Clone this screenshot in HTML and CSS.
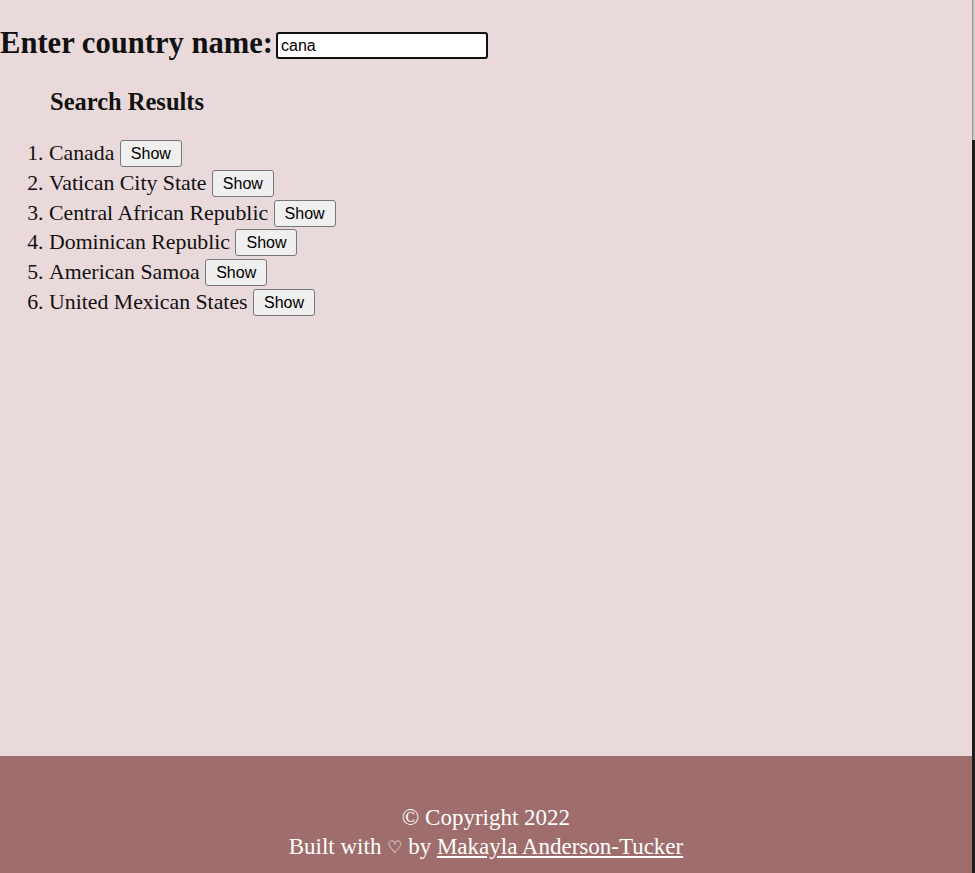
FILE: index.html
```html
<!DOCTYPE html>
<html lang="en">
<head>
<meta charset="utf-8">
<title>Country Search</title>
<link rel="stylesheet" href="styles.css">
</head>
<body>
<div class="page">
  <main class="main">
    <div class="search">
      <h1 class="search-label">Enter country name:</h1>
      <input class="search-input" type="text" value="cana">
    </div>
    <h3 class="results-title">Search Results</h3>
    <ol class="results">
      <li class="result">Canada <button class="show-btn">Show</button></li>
      <li class="result">Vatican City State <button class="show-btn">Show</button></li>
      <li class="result">Central African Republic <button class="show-btn">Show</button></li>
      <li class="result">Dominican Republic <button class="show-btn">Show</button></li>
      <li class="result">American Samoa <button class="show-btn">Show</button></li>
      <li class="result">United Mexican States <button class="show-btn">Show</button></li>
    </ol>
  </main>
  <footer class="footer">
    <div class="footer-line">© Copyright 2022</div>
    <div class="footer-line">Built with <span class="heart">♡</span> by <a class="footer-link" href="#">Makayla Anderson-Tucker</a></div>
  </footer>
</div>
<div class="side-strip">
  <div class="strip-top"></div>
  <div class="strip-bottom"></div>
</div>
</body>
</html>
```
FILE: styles.css
```css
html, body {
  margin: 0;
  padding: 0;
  height: 100%;
}
body {
  display: flex;
  background: #1e1e1e;
  font-family: "Liberation Serif", "Times New Roman", serif;
  color: #111;
  overflow: hidden;
}
.page {
  flex: 1;
  display: flex;
  flex-direction: column;
  background: #ead9da;
  min-height: 100%;
}
.main {
  flex: 1;
}
.search {
  display: flex;
  align-items: flex-end;
  margin-top: 27px;
}
.search-label {
  margin: 0;
  font-size: 30.6px;
  font-weight: bold;
  line-height: 32px;
}
.search-input {
  width: 202px;
  height: 21px;
  margin: 0 0 0 3px;
  padding: 1px 3px;
  border: 2px solid #101010;
  border-radius: 3px;
  background: #fff;
  font-family: "Liberation Sans", Arial, sans-serif;
  font-size: 16px;
  color: #000;
  outline: none;
}
.results-title {
  margin: 30px 0 0 50px;
  font-size: 24.5px;
  font-weight: bold;
  line-height: 26px;
}
.results {
  margin: 24px 0 0 0;
  padding-left: 49px;
  font-size: 21.8px;
}
.result {
  line-height: 29.8px;
}
.show-btn {
  font-family: "Liberation Sans", Arial, sans-serif;
  font-size: 16px;
  padding: 4px 10px 3px;
  margin: 0;
  border: 1px solid #767676;
  border-radius: 3px;
  background: #efefef;
  color: #000;
  vertical-align: 1px;
  line-height: 18px;
}
.footer {
  height: 117px;
  background: #9e6d6c;
  color: #fff;
  text-align: center;
  font-size: 23px;
  line-height: 29px;
  display: flex;
  flex-direction: column;
  justify-content: flex-end;
  padding-bottom: 11px;
  box-sizing: border-box;
}
.heart {
  font-family: "DejaVu Sans", sans-serif;
  font-size: 17px;
  vertical-align: 1px;
}
.footer-link {
  color: #fff;
}
.side-strip {
  width: 3px;
  display: flex;
  flex-direction: column;
}
.strip-top {
  height: 140px;
  background: #c8c8c8;
  border-left: 1px solid #999;
}
.strip-bottom {
  flex: 1;
  background: #1e1e1e;
}
```
